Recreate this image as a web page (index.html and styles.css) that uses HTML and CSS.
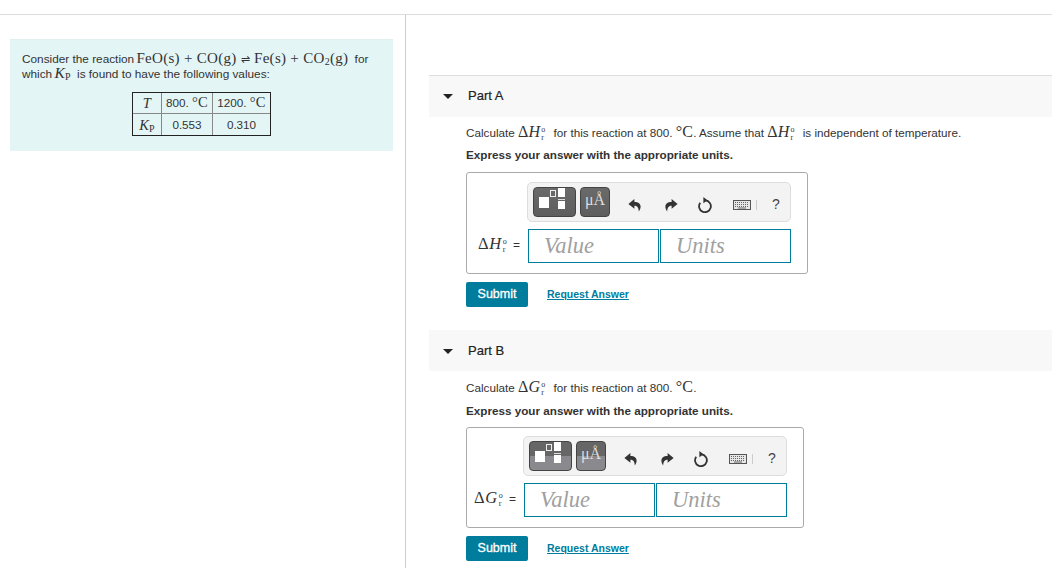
FILE: index.html
```html
<!DOCTYPE html>
<html lang="en">
<head>
<meta charset="utf-8">
<title>Part A and Part B</title>
<link rel="stylesheet" href="styles.css">
</head>
<body>
<svg class="defs" width="0" height="0" aria-hidden="true">
  <symbol id="undo" viewBox="0 0 14 14"><path d="M6.4 1 L0.4 6 L6.4 10.8 V7.8 C9 7.8 10.6 9.4 10.8 13.6 C14.2 8.6 12.8 4.2 6.4 4.1 Z"/></symbol>
  <symbol id="redo" viewBox="0 0 14 14"><path d="M7.6 1 L13.6 6 L7.6 10.8 V7.8 C5 7.8 3.4 9.4 3.2 13.6 C-0.2 8.6 1.2 4.2 7.6 4.1 Z"/></symbol>
  <symbol id="reset" viewBox="0 0 16 16"><path d="M8.5 3.4 A5.9 5.9 0 1 1 3.2 5.8" fill="none" stroke="#333" stroke-width="1.8"/><path d="M6.4 0 L10.4 3.2 L6.4 6.2 Z" fill="#333"/></symbol>
  <symbol id="keys" viewBox="0 0 18 10"><rect x=".5" y=".5" width="17" height="9" fill="#e6e6e6" stroke="#555"/><path d="M2 2.5h14M2 4.5h14M2 6.5h14" stroke="#666" stroke-dasharray="1 1"/><path d="M5 8h8" stroke="#666"/></symbol>
  <symbol id="templ" viewBox="0 0 28 28"><rect x="0" y="9" width="10" height="11" fill="#fff"/><rect x="11.5" y="2.5" width="5" height="6" fill="none" stroke="#eee"/><rect x="19" y="0" width="7" height="9" fill="#fff"/><rect x="19" y="11" width="7" height="1" fill="#ddd"/><rect x="19" y="13" width="7" height="8" fill="#fff"/></symbol>
</svg>
<div class="top-rule"></div>
<main class="page">
  <aside class="intro-col">
    <section class="intro">
      <p>Consider the reaction <span class="m rx">FeO(s) + CO(g) <span class="eq">⇌</span> Fe(s) + CO<sub>2</sub>(g)</span> for<br>which <span class="m kp"><i>K</i><sub>P</sub></span> is found to have the following values:</p>
      <table class="values">
        <tr><td class="m c1"><i>T</i></td><td class="c2">800. <span class="m">°C</span></td><td class="c3">1200. <span class="m">°C</span></td></tr>
        <tr><td class="m c1"><i>K</i><sub>P</sub></td><td class="c2">0.553</td><td class="c3">0.310</td></tr>
      </table>
    </section>
  </aside>
  <div class="parts">
    <section class="part">
      <header class="part-head"><span class="caret"></span><h2>Part A</h2></header>
      <p class="q">Calculate <span class="m">Δ<i>H</i><span class="ss"><sup>o</sup><sub>r</sub></span></span> for this reaction at 800. <span class="m">°C</span>. Assume that <span class="m">Δ<i>H</i><span class="ss"><sup>o</sup><sub>r</sub></span></span> is independent of temperature.</p>
      <p class="hint">Express your answer with the appropriate units.</p>
      <div class="box box-a">
        <div class="toolbar">
          <span class="tbtn t1"><svg width="28" height="28"><use href="#templ"/></svg></span>
          <span class="tbtn t2">μÅ</span>
          <svg class="ic i1" width="14" height="14"><use href="#undo"/></svg>
          <svg class="ic i2" width="14" height="14"><use href="#redo"/></svg>
          <svg class="ic i3" width="16" height="16"><use href="#reset"/></svg>
          <svg class="ic i4" width="18" height="10"><use href="#keys"/></svg>
          <span class="sep"></span>
          <span class="help">?</span>
        </div>
        <div class="answer">
          <label class="lbl"><span class="m">Δ<i>H</i><span class="ss"><sup>o</sup><sub>r</sub></span></span> =</label>
          <span class="field">Value</span><span class="field">Units</span>
        </div>
      </div>
      <div class="actions"><button class="submit">Submit</button><a class="req">Request Answer</a></div>
    </section>
    <section class="part part-b">
      <header class="part-head"><span class="caret"></span><h2>Part B</h2></header>
      <p class="q">Calculate <span class="m">Δ<i>G</i><span class="ss"><sup>o</sup><sub>r</sub></span></span> for this reaction at 800. <span class="m">°C</span>.</p>
      <p class="hint">Express your answer with the appropriate units.</p>
      <div class="box box-b">
        <div class="toolbar">
          <span class="tbtn t1"><svg width="28" height="28"><use href="#templ"/></svg></span>
          <span class="tbtn t2">μÅ</span>
          <svg class="ic i1" width="14" height="14"><use href="#undo"/></svg>
          <svg class="ic i2" width="14" height="14"><use href="#redo"/></svg>
          <svg class="ic i3" width="16" height="16"><use href="#reset"/></svg>
          <svg class="ic i4" width="18" height="10"><use href="#keys"/></svg>
          <span class="sep"></span>
          <span class="help">?</span>
        </div>
        <div class="answer">
          <label class="lbl"><span class="m">Δ<i>G</i><span class="ss"><sup>o</sup><sub>r</sub></span></span> =</label>
          <span class="field">Value</span><span class="field">Units</span>
        </div>
      </div>
      <div class="actions"><button class="submit">Submit</button><a class="req">Request Answer</a></div>
    </section>
  </div>
</main>
</body>
</html>
```
FILE: styles.css
```css
* { box-sizing: border-box; }
html, body { margin: 0; height: 100%; overflow: hidden; background: #fff; }
body { font: 12px/15px "Liberation Sans", Arial, sans-serif; color: #333; }
.defs { position: absolute; }
p, h2 { margin: 0; }
.top-rule { height: 15px; border-bottom: 1px solid #ddd; }
.page { display: flex; height: 553px; }
.intro-col { width: 406px; flex: none; border-right: 1px solid #ccc; padding: 24px 12px 0 10px; }
.intro { height: 112px; background: #e4f5f6; padding: 12px 12px 0; border-top: 1px solid #e0eeee; font-size: 11.8px; }
.intro p { line-height: 15px; white-space: nowrap; }
.m { font-family: "Liberation Serif", "Times New Roman", serif; font-size: 15.5px; line-height: 0; letter-spacing: .2px; }
.m sub { font-size: 10px; line-height: 0; vertical-align: -2px; }
.rx { font-size: 15px; margin: 0 3px 0 -1px; letter-spacing: .3px; }
.kp { margin-right: 3px; margin-left: -1px; }
.eq { font-size: 11px; }
.values { border-collapse: separate; border-spacing: 0; margin: 10px 0 0 110px; width: 139px; height: 43px; border: 1px solid #222; color: #333; font-size: 11.7px; }
.values td { border-right: 1px solid #888; border-bottom: 1px solid #888; padding: 0; text-align: center; height: 21px; line-height: 14px; }
.values td:last-child { border-right: 0; }
.values tr:last-child td { border-bottom: 0; }
.values .m { font-size: 14.5px; }
.c1 { width: 29px; }
.c2 { width: 51px; }
.parts { flex: 1; padding: 60px 0 0 23px; min-width: 0; }
.part-head { height: 42px; background: #f8f8f8; border-top: 1px solid #ddd; display: flex; align-items: center; padding-left: 14px; padding-bottom: 3px; }
.part-b { margin-top: 23px; }
.part-b .part-head { border-top: 0; height: 41px; padding-bottom: 1px; }
.caret { width: 0; height: 0; border-left: 5px solid transparent; border-right: 5px solid transparent; border-top: 5px solid #222; margin-right: 15px; margin-top: 3px; }
h2 { font-size: 13px; font-weight: 400; color: #222; -webkit-text-stroke: 0.2px #222; }
.q { margin: 7px 0 0 37px; line-height: 18px; font-size: 11.7px; white-space: nowrap; }
.part-b .q { margin-top: 8px; }
.q .m { font-size: 16px; }
.hint { margin: 5px 0 0 37px; font-weight: 700; font-size: 11.7px; line-height: 15px; }
.part-b .hint { margin-top: 6px; }
.box { margin: 10px 0 0 37px; border: 1px solid #aaa; border-radius: 3px; height: 102px; padding: 9px 16px 0 0; }
.part-b .box { margin-top: 9px; }
.box-a { width: 342px; }
.box-b { width: 338px; height: 101px; padding-top: 8px; }
.ss { display: inline-block; vertical-align: -3px; margin: 0 5px 0 1px; letter-spacing: 0; }
.ss sup, .ss sub { display: block; font-size: 8px; line-height: 8px; vertical-align: baseline; }
.toolbar { display: flex; align-items: center; width: 264px; height: 40px; margin-left: auto; border: 1px solid #ddd; border-radius: 5px; background: #f3f3f3; padding-left: 5px; }
.tbtn { display: flex; align-items: center; height: 30px; border: 1px solid #444; border-radius: 4px; background: linear-gradient(#6a6a6a, #5e5e5e); color: #ddd; font-family: "Liberation Serif", serif; font-size: 16px; }
.box-b .tbtn { background: linear-gradient(#666 0 50%, #8a8a8e 50% 100%); }
.t1 { width: 43px; padding-left: 5px; }
.t2 { width: 30px; margin-left: 4px; justify-content: center; padding-bottom: 5px; }
.ic { fill: #333; flex: none; margin-top: 5px; }
.i1 { margin-left: 18px; }
.i2 { margin-left: 22px; }
.i3 { margin-left: 19px; }
.i4 { margin-left: 20px; }
.sep { width: 1px; height: 10px; background: #ccc; margin: 5px 0 0 5px; }
.help { margin: 5px 0 0 15px; font-size: 14px; color: #444; }
.answer { display: flex; align-items: center; height: 34px; margin-top: 7px; justify-content: flex-end; }
.lbl { margin-right: 8px; white-space: nowrap; }
.lbl .ss { margin-right: 3px; }
.lbl .m { font-size: 16.5px; letter-spacing: .6px; }
.field { width: 131px; height: 34px; border: 1px solid #007c9c; padding-left: 15px; margin-left: 1px; font: italic 22.5px/32px "Liberation Serif", serif; color: #a0a0a0; }
.lbl + .field { margin-left: 0; }
.actions { display: flex; align-items: center; margin: 8px 0 0 37px; }
.submit { width: 62px; height: 25px; border: 0; border-radius: 2px; background: #007c9c; color: #fff; font: 400 12.5px "Liberation Sans", sans-serif; -webkit-text-stroke: .3px #fff; padding: 0 0 2px; }
.req { margin-left: 19px; color: #007c9c; font-size: 10.5px; font-weight: 700; text-decoration: underline; }
```
